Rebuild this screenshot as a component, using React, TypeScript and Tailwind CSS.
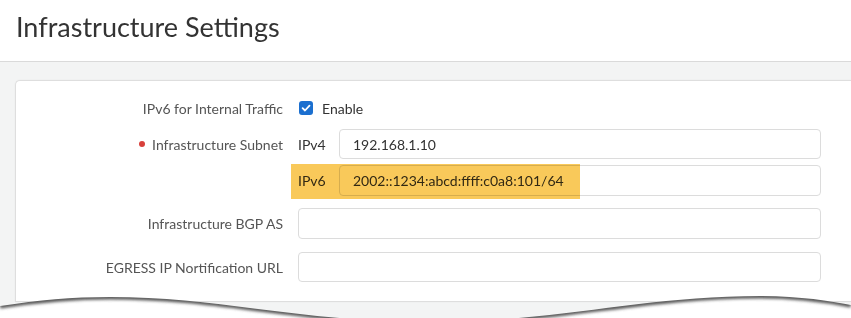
import React from "react";

const font = { fontFamily: "Lato, 'Noto Sans', sans-serif" };

function Input({ value }: { value?: string }) {
  return (
    <div className="flex h-full w-full items-center rounded-[4px] border border-[#dcdcdc] bg-white px-[13px] text-[14px] text-[#333]">
      {value}
    </div>
  );
}

function Label({ children, dot }: { children: React.ReactNode; dot?: boolean }) {
  return (
    <div className="flex items-center justify-end gap-[7px] text-[14px] text-[#555]">
      {dot && <span className="h-[6px] w-[6px] rounded-full bg-[#d8403b]" />}
      <span>{children}</span>
    </div>
  );
}

const WAVE =
  "M0 306 C 40 300, 70 297, 110 297 C 220 297, 300 322, 430 322 C 560 322, 640 296, 760 296 C 800 296, 830 301, 851 305";

export default function App() {
  return (
    <div className="relative h-[318px] w-[851px] overflow-hidden bg-white" style={font}>
      <div className="h-[61px] pl-[16px] pt-[10px] text-[27px] leading-[34px] text-[#333]">
        Infrastructure Settings
      </div>
      <div className="border-t border-[#dadada] bg-[#f3f4f4] pl-[15px] pt-[18px] pb-[30px]">
        <div className="rounded-tl-[5px] border-l border-t border-b border-[#dedede] bg-white pr-[30px] pt-[17px] pb-[19px] shadow-[0_0_2px_rgba(0,0,0,0.05)]">
          <div className="grid grid-cols-[267px_1fr] gap-x-[15px]">
            {/* Row 1 */}
            <div className="flex h-[20px] items-center justify-end">
              <Label>IPv6 for Internal Traffic</Label>
            </div>
            <div className="flex h-[20px] items-center gap-[9px] text-[14px] text-[#333]">
              <span className="ml-[1px] flex h-[14px] w-[14px] items-center justify-center rounded-[3px] bg-[#1b6fcf]">
                <svg width="10" height="10" viewBox="0 0 10 10">
                  <path d="M1.6 5.2 L4 7.5 L8.5 2.6" fill="none" stroke="white" strokeWidth="1.8" strokeLinecap="round" strokeLinejoin="round" />
                </svg>
              </span>
              <span>Enable</span>
            </div>

            {/* Row 2 */}
            <div className="mt-[11px] flex h-[30px] items-center justify-end">
              <Label dot>Infrastructure Subnet</Label>
            </div>
            <div className="mt-[11px] flex flex-col gap-[6px]">
              <div className="flex h-[30px] items-center">
                <span className="w-[41px] text-[14px] text-[#333]">IPv4</span>
                <div className="h-full flex-1">
                  <Input value="192.168.1.10" />
                </div>
              </div>
              <div className="relative flex h-[31px] items-center">
                <span className="w-[41px] text-[14px] text-[#333]">IPv6</span>
                <div className="h-full flex-1">
                  <Input value="2002::1234:abcd:ffff:c0a8:101/64" />
                </div>
                <div className="pointer-events-none absolute left-[-7px] top-[-1px] h-[35px] w-[289px] bg-[#f9c95a] mix-blend-multiply" />
              </div>
            </div>

            {/* Row 3 */}
            <div className="mt-[12px] flex h-[31px] items-center justify-end">
              <Label>Infrastructure BGP AS</Label>
            </div>
            <div className="mt-[12px] h-[31px]">
              <Input />
            </div>

            {/* Row 4 */}
            <div className="mt-[13px] flex h-[30px] items-center justify-end">
              <Label>EGRESS IP Nortification URL</Label>
            </div>
            <div className="mt-[13px] h-[30px]">
              <Input />
            </div>
          </div>
        </div>
      </div>

      <svg className="absolute bottom-0 left-0" width="851" height="40" viewBox="0 278 851 40">
        <defs>
          <filter id="blur" x="-5%" y="-50%" width="110%" height="200%">
            <feGaussianBlur stdDeviation="1.8" />
          </filter>
          <clipPath id="below">
            <path d={`${WAVE} L 851 330 L 0 330 Z`} />
          </clipPath>
        </defs>
        <path d={`${WAVE} L 851 330 L 0 330 Z`} fill="white" />
        <g clipPath="url(#below)">
          <path d={WAVE} fill="none" stroke="#555" strokeWidth="5" filter="url(#blur)" />
        </g>
      </svg>
    </div>
  );
}
